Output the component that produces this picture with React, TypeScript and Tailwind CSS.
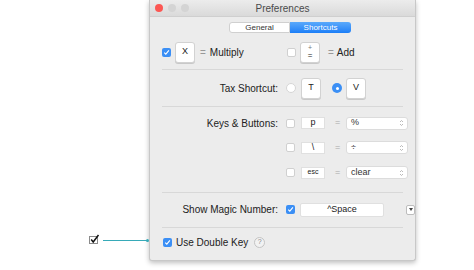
import React from "react";

const font = { fontFamily: '"Liberation Sans", Arial, sans-serif' };

function Check({ on = false }: { on?: boolean }) {
  return on ? (
    <div className="flex h-[9px] w-[9px] items-center justify-center rounded-[2px] bg-[#3b8ff5]">
      <svg width="7" height="7" viewBox="0 0 7 7">
        <path d="M1.2 3.7 L2.8 5.2 L5.9 1.4" fill="none" stroke="#fff" strokeWidth="1.1" />
      </svg>
    </div>
  ) : (
    <div className="h-[9px] w-[9px] rounded-[2px] border border-[#d0d0d0] bg-white" />
  );
}

function Radio({ on = false }: { on?: boolean }) {
  return on ? (
    <div className="flex h-[10px] w-[10px] items-center justify-center rounded-full bg-[#3b8ff5]">
      <div className="h-[3px] w-[3px] rounded-full bg-white" />
    </div>
  ) : (
    <div className="h-[10px] w-[10px] rounded-full border border-[#d6d6d6] bg-white" />
  );
}

function Key({ children }: { children: React.ReactNode }) {
  return (
    <div className="flex h-[21px] w-[20px] flex-col items-center justify-center rounded-[3px] border border-[#d2d2d2] bg-white text-[9px] text-[#222] shadow-[0_1px_0_#c8c8c8]">
      {children}
    </div>
  );
}

function Select({ value }: { value: string }) {
  return (
    <div className="flex h-[13px] w-[62px] items-center justify-between rounded-[3px] border border-[#dcdcdc] bg-white pl-[4px] pr-[3px] text-[9px] text-[#333]">
      <span>{value}</span>
      <svg width="5" height="8" viewBox="0 0 5 8">
        <path d="M1 3 L2.5 1.5 L4 3 M1 5 L2.5 6.5 L4 5" fill="none" stroke="#aaa" strokeWidth="0.8" />
      </svg>
    </div>
  );
}

function KeyRow({ k, v, small }: { k: string; v: string; small?: boolean }) {
  return (
    <div className="flex h-[25px] items-center">
      <div className="w-[136px]" />
      <Check />
      <div
        className={`ml-[6px] flex h-[12px] w-[24px] items-center justify-center border border-[#e0e0e0] bg-white text-[#222] ${small ? "text-[7px]" : "text-[9px]"}`}
      >
        {k}
      </div>
      <span className="ml-[10px] w-[11px] text-[9px] text-[#aaa]">=</span>
      <Select value={v} />
    </div>
  );
}

function Sep() {
  return <div className="mx-[12px] h-px bg-[#d8d8d8]" />;
}

export default function App() {
  return (
    <div className="relative h-[270px] w-[474px] overflow-hidden bg-white text-[10px] text-[#222]" style={font}>
      {/* annotation: checkbox glyph + leader line */}
      <div className="absolute left-[89px] top-[234px] flex items-center">
        <svg width="12" height="10" viewBox="0 0 12 10">
          <rect x="0.5" y="2.5" width="8" height="7" fill="#fff" stroke="#8a8a8a" />
          <path d="M2.2 5.6 L4.2 8 L9.5 1" fill="none" stroke="#111" strokeWidth="1.5" />
        </svg>
        <div className="ml-[2px] mt-[3px] h-px w-[44px] bg-[#37aab8]" />
        <div className="-ml-[1px] mt-[3px] h-[3px] w-[3px] rounded-full bg-[#37aab8]" />
      </div>

      {/* window */}
      <div className="ml-[149px] flex h-[261px] w-[267px] flex-col overflow-hidden rounded-b-[3px] border-x border-b border-[#c8c8c8] bg-[#ececec] shadow-[0_2px_5px_rgba(0,0,0,0.25)]">
        <div className="relative flex h-[17px] items-center justify-center border-b border-[#cfcfcf] bg-gradient-to-b from-[#ececec] to-[#dadada]">
          <div className="absolute left-[5px] flex gap-[5px]">
            <div className="h-[8px] w-[8px] rounded-full bg-[#fc5753]" />
            <div className="h-[8px] w-[8px] rounded-full bg-[#d4d4d4]" />
            <div className="h-[8px] w-[8px] rounded-full bg-[#d4d4d4]" />
          </div>
          <span className="text-[10px] text-[#4a4a4a]">Preferences</span>
        </div>

        <div className="mt-[5px] flex justify-center pl-[15px]">
          <div className="flex h-[11px] w-[61px] items-center justify-center rounded-l-[3px] border border-[#d0d0d0] bg-white text-[8px] text-[#333]">
            General
          </div>
          <div className="flex h-[11px] w-[61px] items-center justify-center rounded-r-[3px] bg-gradient-to-b from-[#5aa9fb] to-[#1a7ef7] text-[8px] text-white">
            Shortcuts
          </div>
        </div>

        {/* row 1 */}
        <div className="mt-[8px] flex h-[22px] items-center">
          <div className="flex w-[137px] items-center pl-[12px]">
            <Check on />
            <div className="ml-[4px]">
              <Key>X</Key>
            </div>
            <span className="ml-[5px] text-[#999]">=</span>
            <span className="ml-[4px]">Multiply</span>
          </div>
          <Check />
          <div className="ml-[4px]">
            <Key>
              <span className="text-[7px] leading-[8px] text-[#777]">+</span>
              <span className="text-[8px] leading-[8px]">=</span>
            </Key>
          </div>
          <span className="ml-[8px] text-[#999]">=</span>
          <span className="ml-[3px]">Add</span>
        </div>

        <div className="mt-[6px]">
          <Sep />
        </div>

        {/* tax */}
        <div className="mt-[7px] flex h-[22px] items-center">
          <div className="w-[128px] text-right">Tax Shortcut:</div>
          <div className="ml-[8px]">
            <Radio />
          </div>
          <div className="ml-[5px]">
            <Key>T</Key>
          </div>
          <div className="ml-[11px]">
            <Radio on />
          </div>
          <div className="ml-[4px]">
            <Key>V</Key>
          </div>
        </div>

        <div className="mt-[7px]">
          <Sep />
        </div>

        {/* keys */}
        <div className="mt-[4px] flex h-[24px] items-center">
          <div className="w-[128px] text-right">Keys &amp; Buttons:</div>
          <div className="ml-[8px]">
            <Check />
          </div>
          <div className="ml-[6px] flex h-[12px] w-[24px] items-center justify-center border border-[#e0e0e0] bg-white text-[9px]">
            p
          </div>
          <span className="ml-[10px] w-[11px] text-[9px] text-[#aaa]">=</span>
          <Select value="%" />
        </div>
        <KeyRow k="\" v="÷" />
        <KeyRow k="esc" v="clear" small />

        <div className="mt-[7px]">
          <Sep />
        </div>

        {/* magic */}
        <div className="mt-[8px] flex h-[17px] items-center">
          <div className="w-[128px] text-right">Show Magic Number:</div>
          <div className="ml-[8px]">
            <Check on />
          </div>
          <div className="ml-[5px] flex h-[14px] w-[84px] items-center justify-center rounded-[2px] border border-[#e0e0e0] bg-white text-[9px]">
            ^Space
          </div>
          <div className="ml-[22px] flex h-[10px] w-[9px] items-center justify-center rounded-[2px] border border-[#bdbdbd] bg-white">
            <svg width="4" height="3" viewBox="0 0 4 3">
              <path d="M0 0 L4 0 L2 3 Z" fill="#444" />
            </svg>
          </div>
        </div>

        <div className="mt-[9px]">
          <Sep />
        </div>

        {/* double key */}
        <div className="mt-[8px] flex h-[13px] items-center pl-[13px]">
          <Check on />
          <span className="ml-[4px]">Use Double Key</span>
          <div className="ml-[6px] flex h-[11px] w-[11px] items-center justify-center rounded-full border border-[#c4c4c4] bg-[#f2f2f2] text-[7px] text-[#888]">
            ?
          </div>
        </div>
      </div>
    </div>
  );
}
